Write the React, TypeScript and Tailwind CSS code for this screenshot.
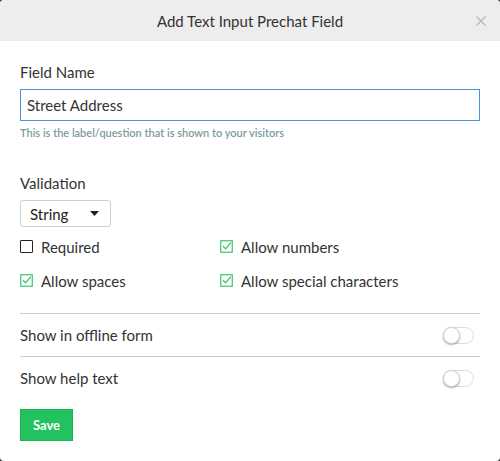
import React from 'react';

const font = { fontFamily: 'Lato, "Open Sans", sans-serif' };

function Check({ checked }: { checked: boolean }) {
  if (!checked) {
    return <span className="h-[13px] w-[13px] shrink-0 rounded-[1px] border-[1.5px] border-[#222]" />;
  }
  return (
    <svg width="13" height="13" viewBox="0 0 13 13" className="shrink-0">
      <rect x="0.75" y="0.75" width="11.5" height="11.5" fill="none" stroke="#3cc46a" strokeWidth="1.2" />
      <path d="M3 6.2 L5.6 8.8 L10.8 2.6" fill="none" stroke="#3cc46a" strokeWidth="1.3" />
    </svg>
  );
}

function Toggle() {
  return (
    <span className="relative inline-block h-[17px] w-[31px] rounded-full border border-[#dcdcdc] bg-white">
      <span className="absolute -left-px -top-px h-[17px] w-[17px] rounded-full border border-[#d0d0d0] bg-white shadow-[0_1px_2px_rgba(0,0,0,0.35)]" />
    </span>
  );
}

export default function App() {
  return (
    <div className="min-h-[461px] w-[500px] bg-[#3a3a3a]" style={font}>
      <div className="h-[461px] w-[500px] overflow-hidden rounded-[4px] bg-white">
        {/* Header */}
        <div className="relative flex h-[41px] items-center justify-center bg-[#ededed]">
          <span className="text-[15px] leading-[18px] text-[#333]">Add Text Input Prechat Field</span>
          <svg width="10" height="10" viewBox="0 0 10 10" className="absolute right-[14px] top-[16px]">
            <path d="M0.5 0.5 L9.5 9.5 M9.5 0.5 L0.5 9.5" stroke="#b5b5b5" strokeWidth="1.2" />
          </svg>
        </div>

        <div className="px-5 text-[15px] leading-[18px] text-[#333]">
          {/* Field name */}
          <div className="pt-[22px]">Field Name</div>
          <div className="mt-[8px] flex h-[32px] items-center border border-[#4a90e2] px-[6px]">
            Street Address
          </div>
          <div className="mt-[5px] text-[11px] leading-[14px] font-semibold text-[#7c9ba0]">
            This is the label/question that is shown to your visitors
          </div>

          {/* Validation */}
          <div className="mt-[34px]">Validation</div>
          <div className="mt-[8px] flex h-[27px] w-[91px] items-center justify-between rounded-[3px] border border-[#cfcfcf] pl-[9px] pr-[11px] text-[#222]">
            <span>String</span>
            <svg width="9" height="5" viewBox="0 0 9 5">
              <path d="M0 0 L9 0 L4.5 5 Z" fill="#222" />
            </svg>
          </div>

          <div className="mt-[10px] grid grid-cols-[200px_1fr] gap-y-[15px]">
            <div className="flex h-[19px] items-center gap-[8px]">
              <Check checked={false} />
              <span>Required</span>
            </div>
            <div className="flex h-[19px] items-center gap-[8px]">
              <Check checked />
              <span>Allow numbers</span>
            </div>
            <div className="flex h-[19px] items-center gap-[8px]">
              <Check checked />
              <span>Allow spaces</span>
            </div>
            <div className="flex h-[19px] items-center gap-[8px]">
              <Check checked />
              <span>Allow special characters</span>
            </div>
          </div>

          {/* Toggles */}
          <div className="mt-[23px] border-t border-[#cccccc]">
            <div className="flex h-[42px] items-center justify-between pr-[6px]">
              <span>Show in offline form</span>
              <Toggle />
            </div>
          </div>
          <div className="border-t border-[#cccccc]">
            <div className="flex h-[42px] items-center justify-between pr-[6px]">
              <span>Show help text</span>
              <Toggle />
            </div>
          </div>

          <button className="mt-[10px] flex h-[32px] w-[53px] items-center justify-center border border-[#1fb154] bg-[#22c25e] text-[13px] font-bold text-white">
            Save
          </button>
        </div>
      </div>
    </div>
  );
}
